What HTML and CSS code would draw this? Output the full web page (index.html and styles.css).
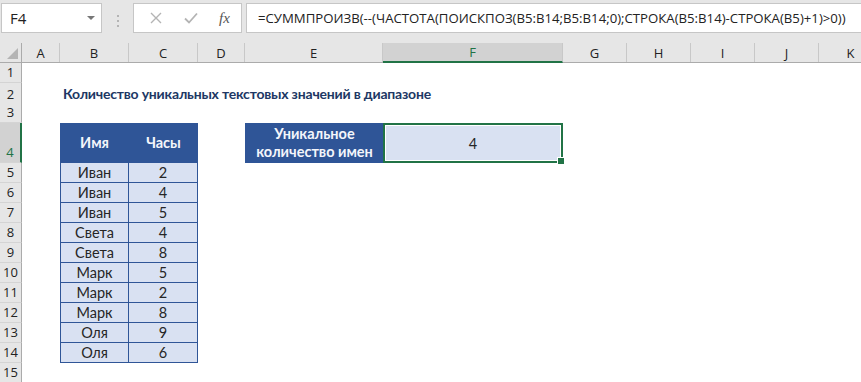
FILE: index.html
```html
<!DOCTYPE html>
<html>
<head>
<meta charset="utf-8">
<title>Excel</title>
<link rel="stylesheet" href="styles.css">
</head>
<body>

<!-- barra de formulas -->
<div class="ribbon">
  <div class="namebox"><span>F4</span><span class="caret"></span></div>
  <div class="grip"><i></i><i></i><i></i></div>
  <div class="fxbox">
    <svg class="ico" width="12" height="12" viewBox="0 0 12 12"><path d="M1 1L11 11M11 1L1 11" stroke="#b4b4b4" stroke-width="1.4" fill="none"/></svg>
    <svg class="ico" width="14" height="12" viewBox="0 0 14 12"><path d="M1 6.5L5 10.5L13 1.5" stroke="#b4b4b4" stroke-width="1.8" fill="none"/></svg>
    <span class="fx">fx</span>
  </div>
  <div class="formula">=СУММПРОИЗВ(--(ЧАСТОТА(ПОИСКПОЗ(B5:B14;B5:B14;0);СТРОКА(B5:B14)-СТРОКА(B5)+1)&gt;0))</div>
</div>

<!-- hoja -->
<div class="sheet">
  <div class="row colhead">
    <div class="corner"></div>
    <div class="ch">A</div><div class="ch">B</div><div class="ch">C</div><div class="ch">D</div>
    <div class="ch">E</div><div class="ch active">F</div><div class="ch">G</div><div class="ch">H</div>
    <div class="ch">I</div><div class="ch">J</div><div class="ch">K</div>
  </div>

  <div class="row"><div class="rh">1</div></div>
  <div class="row"><div class="rh">2</div><div></div><div class="title">Количество уникальных текстовых значений в диапазоне</div></div>
  <div class="row"><div class="rh">3</div></div>

  <div class="row tall">
    <div class="rh active">4</div>
    <div></div>
    <div class="hd first">Имя</div>
    <div class="hd">Часы</div>
    <div></div>
    <div class="hd label">Уникальное<br>количество имен</div>
    <div class="result">4<span class="sel"></span></div>
  </div>

  <div class="row"><div class="rh">5</div><div></div><div class="td first">Иван</div><div class="td">2</div></div>
  <div class="row"><div class="rh">6</div><div></div><div class="td first">Иван</div><div class="td">4</div></div>
  <div class="row"><div class="rh">7</div><div></div><div class="td first">Иван</div><div class="td">5</div></div>
  <div class="row"><div class="rh">8</div><div></div><div class="td first">Света</div><div class="td">4</div></div>
  <div class="row"><div class="rh">9</div><div></div><div class="td first">Света</div><div class="td">8</div></div>
  <div class="row"><div class="rh">10</div><div></div><div class="td first">Марк</div><div class="td">5</div></div>
  <div class="row"><div class="rh">11</div><div></div><div class="td first">Марк</div><div class="td">2</div></div>
  <div class="row"><div class="rh">12</div><div></div><div class="td first">Марк</div><div class="td">8</div></div>
  <div class="row"><div class="rh">13</div><div></div><div class="td first">Оля</div><div class="td">9</div></div>
  <div class="row"><div class="rh">14</div><div></div><div class="td first">Оля</div><div class="td">6</div></div>
  <div class="row"><div class="rh">15</div></div>
</div>

</body>
</html>
```

FILE: styles.css
```css
* {
    margin: 0;
    padding: 0;
    box-sizing: border-box;
}

body {
    width: 861px;
    height: 382px;
    overflow: hidden;
    background: #ffffff;
    font-family: "Open Sans", "Noto Sans", sans-serif;
}

/* barra de formulas */
.ribbon {
    display: flex;
    align-items: flex-start;
    height: 43px;
    padding: 3px 0 0 1px;
    background-color: #e6e6e6;
}

.namebox {
    display: flex;
    align-items: center;
    justify-content: space-between;
    width: 101px;
    height: 30px;
    padding: 0 6px 0 8px;
    background: #ffffff;
    border: 1px solid #c6c6c6;
    font-size: 15px;
    color: #222;
}

.caret {
    width: 0;
    height: 0;
    border-left: 4px solid transparent;
    border-right: 4px solid transparent;
    border-top: 4px solid #777;
}

.grip {
    display: flex;
    flex-direction: column;
    align-items: center;
    gap: 3px;
    width: 31px;
    padding-top: 12px;
}

.grip i {
    display: block;
    width: 2px;
    height: 2px;
    background: #b4b4b4;
}

.fxbox {
    display: flex;
    align-items: center;
    width: 109px;
    height: 30px;
    padding-left: 16px;
    gap: 22px;
    background: #ffffff;
    border: 1px solid #c6c6c6;
}

.fx {
    font-family: "Liberation Serif", serif;
    font-style: italic;
    font-size: 15px;
    color: #555;
    margin-left: -1px;
}

.formula {
    flex: 1;
    height: 30px;
    margin-left: 4px;
    padding-left: 11px;
    line-height: 28px;
    white-space: nowrap;
    overflow: hidden;
    background: #ffffff;
    border: 1px solid #c6c6c6;
    border-right: none;
    font-size: 13.2px;
    color: #222;
}

/* hoja */
.sheet {
    font-family: "Lato", "Noto Sans", sans-serif;
}

.row {
    display: grid;
    grid-template-columns: 22px 38px 69px 69px 47px 138px 180px 64px 64px 64px 64px 64px;
    height: 20px;
}

.row.tall {
    height: 40px;
}

.colhead {
    background: #e6e6e6;
    border-bottom: 1px solid #ababab;
}

.corner {
    position: relative;
    border-right: 1px solid #ababab;
}

.corner::after {
    content: "";
    position: absolute;
    right: 3px;
    bottom: 3px;
    width: 0;
    height: 0;
    border-left: 11px solid transparent;
    border-bottom: 11px solid #b4b4b4;
}

.ch {
    display: flex;
    align-items: center;
    justify-content: center;
    border-right: 1px solid #c8c8c8;
    font-family: "Open Sans", sans-serif;
    font-size: 13px;
    color: #222;
}

.ch.active {
    background: #d2d2d2;
    border-bottom: 2px solid #217346;
    color: #217346;
    margin-bottom: -1px;
}

.rh {
    display: flex;
    align-items: flex-end;
    justify-content: center;
    padding-bottom: 1px;
    background: #e6e6e6;
    border-right: 1px solid #ababab;
    border-bottom: 1px solid #d4d4d4;
    font-family: "Open Sans", sans-serif;
    font-size: 13px;
    color: #222;
}

.rh.active {
    background: #d2d2d2;
    border-right: 2px solid #217346;
    color: #217346;
}

.title {
    padding: 0 0 0 3px;
    white-space: nowrap;
    font-size: 14px;
    letter-spacing: -0.2px;
    font-weight: bold;
    color: #203764;
    line-height: 22px;
}

/* tabla de datos */
.hd {
    display: flex;
    align-items: center;
    justify-content: center;
    text-align: center;
    background: #2f5597;
    color: #f4f6fb;
    font-size: 14.5px;
    font-weight: bold;
    line-height: 18px;
    border: 1px solid #2f5597;
}

.td {
    display: flex;
    align-items: flex-end;
    justify-content: center;
    padding-bottom: 1px;
    background: #d9e1f2;
    border-right: 1px solid #2f5597;
    border-bottom: 1px solid #2f5597;
    font-size: 14.5px;
    color: #262626;
}

.td.first {
    border-left: 1px solid #2f5597;
}

.hd.label {
    border-right: none;
}

.result {
    position: relative;
    display: flex;
    align-items: center;
    justify-content: center;
    background: #d9e1f2;
    font-size: 14.5px;
    color: #262626;
}

/* seleccion de celda activa */
.sel {
    position: absolute;
    left: 0;
    top: 0;
    right: 0;
    bottom: 0;
    border: 2px solid #217346;
    box-shadow: inset 0 0 0 1px #ffffff;
}

.sel::after {
    content: "";
    position: absolute;
    right: -4px;
    bottom: -4px;
    width: 6px;
    height: 6px;
    background: #217346;
    border: 1px solid #ffffff;
}
```
